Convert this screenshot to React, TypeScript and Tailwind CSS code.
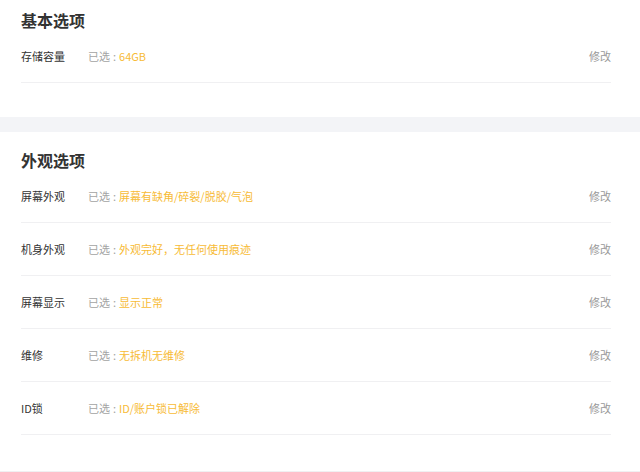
const basic = [{ label: "存储容量", value: "64GB" }];

const looks = [
  { label: "屏幕外观", value: "屏幕有缺角/碎裂/脱胶/气泡" },
  { label: "机身外观", value: "外观完好，无任何使用痕迹" },
  { label: "屏幕显示", value: "显示正常" },
  { label: "维修", value: "无拆机无维修" },
  { label: "ID锁", value: "ID/账户锁已解除" },
];

const OptionRow = ({ label, value }: { label: string; value: string }) => (
  <div className="flex items-start h-[53px] pt-[16px] border-b border-[#f0f0f2] text-[11px] leading-[20px]">
    <div className="w-[67px] text-[#333]">{label}</div>
    <div className="flex-1 text-[#a3a3a3]">
      已选<span className="mx-[3px]">:</span>
      <span className="text-[#f7bb36]">{value}</span>
    </div>
    <div className="text-[#999]">修改</div>
  </div>
);

export default function App() {
  return (
    <div className="w-[640px] min-h-[472px] bg-[#f3f4f7] font-['Noto_Sans_CJK_SC','Noto_Sans',sans-serif]">
      {/* 基本选项 */}
      <section className="bg-white pl-[21px] pr-[29px] pt-[10px] pb-[34px]">
        <h2 className="text-[16px] leading-[20px] font-bold text-[#333]">基本选项</h2>
        {basic.map((r) => (
          <OptionRow key={r.label} {...r} />
        ))}
      </section>

      <div className="h-[15px]" />

      {/* 外观选项 */}
      <section className="bg-white pl-[21px] pr-[29px] pt-[18px] pb-[36px] border-b border-[#f0f0f2]">
        <h2 className="text-[16px] leading-[20px] font-bold text-[#333]">外观选项</h2>
        {looks.map((r) => (
          <OptionRow key={r.label} {...r} />
        ))}
      </section>
    </div>
  );
}
